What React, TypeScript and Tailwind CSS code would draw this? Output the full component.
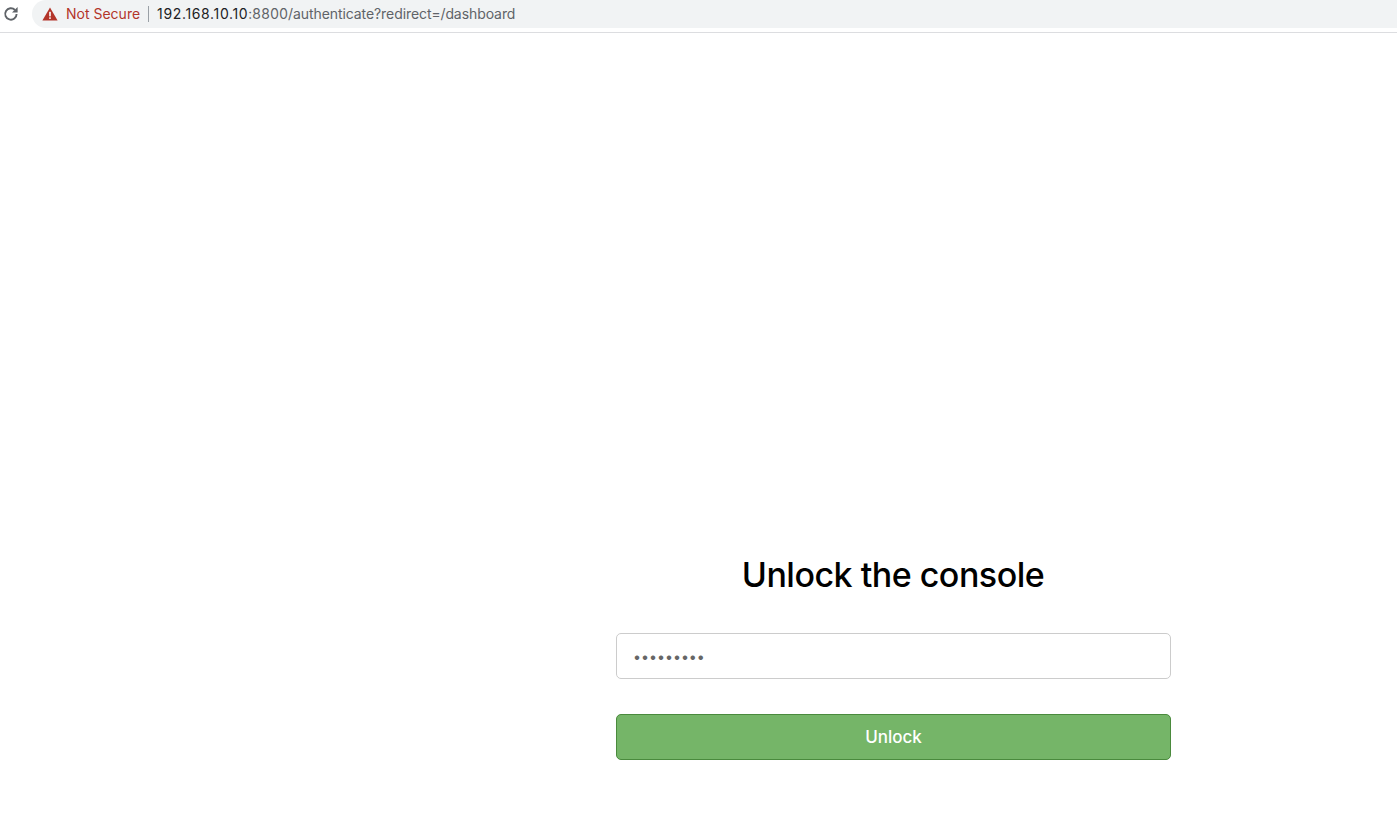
import React from "react";

function ReloadIcon() {
  return (
    <svg width="16" height="16" viewBox="0 0 16 16" className="shrink-0">
      <path
        d="M13.6 8a5.7 5.7 0 1 1-1.6-4"
        fill="none"
        stroke="#5f6368"
        strokeWidth="1.9"
      />
      <path d="M14.6 1v5.6H9z" fill="#5f6368" />
    </svg>
  );
}

function WarningIcon() {
  return (
    <svg width="16" height="14" viewBox="0 0 16 14" className="shrink-0">
      <path d="M8 .6 15.6 13.6H.4z" fill="#b3352a" />
      <rect x="7.2" y="4.8" width="1.6" height="4.6" fill="#fff" />
      <rect x="7.2" y="10.3" width="1.6" height="1.6" fill="#fff" />
    </svg>
  );
}

export default function App() {
  return (
    <div className="min-h-[822px] w-full bg-white font-['Inter','Liberation_Sans',sans-serif]">
      <div className="flex h-[33px] items-start border-b border-[#dcdde0] bg-white pl-[3px]">
        <div className="mt-[6px] w-[29px]">
          <ReloadIcon />
        </div>
        <div className="flex h-[28px] flex-1 items-center rounded-l-[14px] bg-[#f1f3f4] pb-[1px] pl-[10px] text-[14px] font-['Inter',sans-serif]">
          <WarningIcon />
          <span className="ml-[8px] text-[#b3352a]">Not Secure</span>
          <span className="mx-[8px] h-[16px] w-px bg-[#9aa0a6]" />
          <span className="tracking-[0.65px] text-[#202124]">192.168.10.10</span>
          <span className="tracking-[-0.08px] tabular-nums text-[#5f6368]">:8800/authenticate?redirect=/dashboard</span>
        </div>
      </div>
      <div className="ml-[616px] flex w-[555px] flex-col pt-[519px] pr-[1px]">
        <h1 className="text-center text-[34px] leading-[46px] font-medium tracking-[-0.5px] text-black">
          Unlock the console
        </h1>
        <input
          type="password"
          defaultValue="123456789"
          readOnly
          className="mt-[35px] h-[46px] w-[555px] rounded-[5px] border border-[#cccccc] bg-white px-[16px] text-[14.2px] text-[#666666] outline-none"
        />
        <button className="mt-[35px] h-[46px] w-[555px] rounded-[5px] border border-[#4a8a3d] bg-[#75b568] pt-[1px] text-[17px] font-medium text-white">
          Unlock
        </button>
      </div>
    </div>
  );
}
